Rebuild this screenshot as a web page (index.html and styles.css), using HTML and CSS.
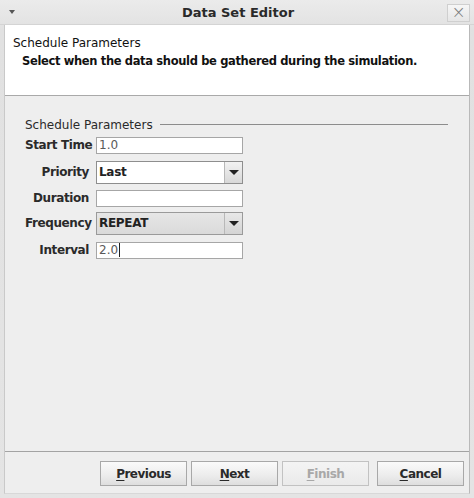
FILE: index.html
```html
<!DOCTYPE html>
<html>
<head>
<meta charset="utf-8">
<link rel="stylesheet" href="styles.css">
</head>
<body>
<div class="window">
  <div class="titlebar">
    <span class="menu-arrow"></span>
    <span class="title">Data Set Editor</span>
    <span class="close">×</span>
  </div>
  <div class="dialog">
    <div class="header">
      <div class="h-title">Schedule Parameters</div>
      <div class="h-desc">Select when the data should be gathered during the simulation.</div>
    </div>
    <div class="content">
      <div class="group-title"><span>Schedule Parameters</span><span class="rule"></span></div>
      <div class="form">
        <div class="row r1">
          <label class="lbl">Start Time</label>
          <div class="field light">1.0</div>
        </div>
        <div class="row r2">
          <label class="lbl">Priority</label>
          <div class="combo white"><span class="val">Last</span><span class="arrow"><i></i></span></div>
        </div>
        <div class="row r3">
          <label class="lbl">Duration</label>
          <div class="field"></div>
        </div>
        <div class="row r4">
          <label class="lbl">Frequency</label>
          <div class="combo gray"><span class="val">REPEAT</span><span class="arrow"><i></i></span></div>
        </div>
        <div class="row r5">
          <label class="lbl">Interval</label>
          <div class="field light">2.0<span class="caret"></span></div>
        </div>
      </div>
    </div>
    <div class="buttons">
      <button class="btn"><u>P</u>revious</button>
      <button class="btn"><u>N</u>ext</button>
      <button class="btn disabled"><u>F</u>inish</button>
      <button class="btn cancel"><u>C</u>ancel</button>
    </div>
  </div>
</div>
</body>
</html>
```
FILE: styles.css
```css
* { box-sizing: border-box; }
html, body { margin: 0; padding: 0; }
body {
  width: 474px;
  height: 498px;
  background: #e2e2e2;
  font-family: "DejaVu Sans", sans-serif;
  color: #222;
  overflow: hidden;
}
.window {
  width: 474px;
  height: 498px;
  display: flex;
  flex-direction: column;
  background: linear-gradient(#ebebeb, #e1e1e1 30px, #e4e4e4);
}
.titlebar {
  height: 25px;
  flex: none;
  display: flex;
  align-items: center;
  position: relative;
  border-bottom: 1px solid #d4d4d4;
}
.menu-arrow {
  position: absolute;
  left: 9px;
  top: 10px;
  width: 0; height: 0;
  border-left: 3.5px solid transparent;
  border-right: 3.5px solid transparent;
  border-top: 4px solid #555;
}
.title {
  flex: 1;
  text-align: center;
  font-weight: bold;
  font-size: 13px;
  color: #2a2a2a;
  padding-left: 2px;
}
.close {
  position: absolute;
  right: 4px;
  top: 4px;
  width: 23px;
  height: 18px;
  border: 1px solid #cfcfcf;
  background: linear-gradient(#f6f6f6, #e6e6e6);
  color: #7a7a7a;
  font-family: "DejaVu Sans", sans-serif;
  font-weight: 200;
  font-size: 17px;
  line-height: 15px;
  text-align: center;
}
.dialog {
  margin: 0 4px 4px 4px;
  flex: 1;
  display: flex;
  flex-direction: column;
  border-left: 1px solid #c9c9c9;
  border-right: 1px solid #b9b9b9;
  border-bottom: 1px solid #d8d8d8;
  background: #eeeeee;
}
.header {
  height: 71px;
  flex: none;
  background: #fff;
  border-bottom: 1px solid #a9a9a9;
  padding: 11px 0 0 8px;
}
.h-title {
  font-size: 12px;
  color: #111;
  line-height: 15px;
}
.h-desc {
  margin-top: 3px;
  font-size: 11.5px;
  font-weight: bold;
  color: #111;
  line-height: 15px;
  padding-left: 9px;
  letter-spacing: -0.35px;
}
.content {
  flex: 1;
  padding: 21px 0 0 20px;
}
.group-title {
  display: flex;
  align-items: center;
  font-size: 12px;
  color: #2a2a2a;
  height: 15px;
}
.group-title .rule {
  margin-left: 7px;
  width: 288px;
  height: 1px;
  background: #8c8c8c;
}
.form {
  display: flex;
  flex-direction: column;
}
.row {
  display: flex;
  align-items: center;
  gap: 7px;
}
.r1 { margin-top: 5px; }
.r2 { margin-top: 7px; }
.r3 { margin-top: 6px; }
.r4 { margin-top: 5px; }
.r5 { margin-top: 7px; }
.lbl {
  width: 64px;
  flex: none;
  font-size: 12px;
  font-weight: bold;
  color: #2a2a2a;
  text-align: right;
  letter-spacing: -0.4px;
  white-space: nowrap;
  line-height: 15px;
}
.field {
  width: 147px;
  height: 17px;
  border: 1px solid #a6a6a6;
  background: #fff;
  font-size: 12px;
  line-height: 15px;
  padding-left: 2px;
}
.light { color: #5a5a5a; }
.caret {
  display: inline-block;
  width: 1px;
  height: 14px;
  background: #222;
  vertical-align: -3px;
  margin-left: 1px;
}
.combo {
  width: 147px;
  height: 23px;
  border: 1px solid #8e8e8e;
  display: flex;
  font-size: 12px;
  font-weight: bold;
  color: #222;
  letter-spacing: -0.3px;
}
.combo.white { background: #fff; }
.combo.gray { background: linear-gradient(#e6e6e6, #dadada); border-color: #9a9a9a; }
.combo .val {
  flex: 1;
  padding-left: 2px;
  line-height: 21px;
}
.combo .arrow {
  width: 18px;
  border-left: 1px solid #b8b8b8;
  background: linear-gradient(#f2f2f2, #d8d8d8);
  display: flex;
  align-items: center;
  justify-content: center;
}
.combo.gray .arrow { background: linear-gradient(#e8e8e8, #d4d4d4); }
.combo .arrow i {
  width: 0; height: 0;
  border-left: 5px solid transparent;
  border-right: 5px solid transparent;
  border-top: 5px solid #222;
}
.buttons {
  flex: none;
  height: 42px;
  border-top: 1px solid #a3a3a3;
  display: flex;
  align-items: flex-start;
  padding: 9px 0 0 95px;
  gap: 4px;
}
.btn {
  width: 87px;
  height: 25px;
  border: 1px solid #a8a8a8;
  background: linear-gradient(#fafafa, #ececec 60%, #dedede);
  font-family: "DejaVu Sans", sans-serif;
  font-size: 12px;
  font-weight: bold;
  color: #2a2a2a;
  letter-spacing: -0.5px;
  padding: 0;
  margin: 0;
}
.btn u { text-decoration-thickness: 1px; text-underline-offset: 2px; }
.btn.disabled { color: #a8a8a8; background: linear-gradient(#f4f4f4, #eaeaea); border-color: #c2c2c2; }
.btn.cancel { margin-left: 4px; }
```
